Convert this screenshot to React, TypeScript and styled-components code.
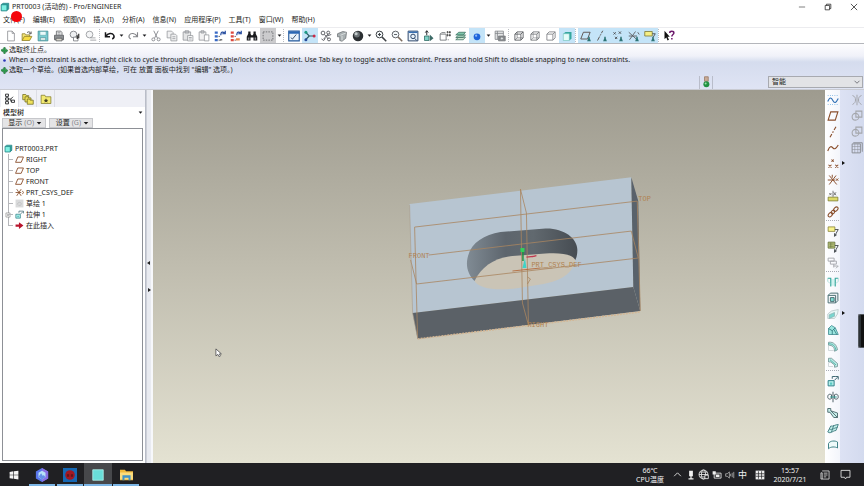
import React from "react";
import styled, { createGlobalStyle, css } from "styled-components";

const GlobalStyle = createGlobalStyle`
  * { box-sizing: border-box; }
  html, body { margin: 0; height: 100%; }
  #root { height: 100%; }
  body, button, select {
    font-family: "Noto Sans", "Noto Sans CJK SC", sans-serif;
    color: #1d1d22;
  }
  button { border: 0; padding: 0; background: none; font-size: 7px; }
`;

/* ---------- icons, all on a 16 x 16 grid ---------- */

const K = "#444a4e";
const T = "#35a79c";
const B = "#8a4f2c";
const G = "#a4a6ab";

const eye = <path d="M11 9h2v2l1.500 4h-5L11 11z" fill="#2f7476" />;
const cube = (stroke: string, hidden: boolean) => (
  <g fill="none" stroke={stroke} strokeWidth="1.200">
    <path d="M2.500 5.500h8v8h-8zM2.500 5.500l3-3h8l-3 3M13.500 2.500v8l-3 3" />
    {hidden && <path d="M5.500 2.500v8h8M5.500 10.500l-3 3" strokeWidth=".8" />}
  </g>
);

const icons: Record<string, React.ReactNode> = {
  part: (
    <g stroke="#1e7f80" strokeWidth="1">
      <path d="M2 4l3-2h9v9l-3 3H2z" fill="#2d9c9a" />
      <path d="M2 4.500h9V14H2z" fill="#7ff0e2" />
    </g>
  ),
  file: <path d="M3.500 1.500h6l3 3v10h-9zM9.500 1.500v3h3" fill="#fff" stroke="#85878c" />,
  open: (
    <g stroke="#8a7a22" strokeWidth="1">
      <path d="M1.500 14V5h4l1 1.500h5V9" fill="#f4e67b" />
      <path d="M1.500 14l3-5.500h10l-3 5.500z" fill="#f6dc45" />
      <path d="M8 3.500c2-2 4-1 5 1M13.500 2v3h-3" fill="none" stroke="#333" />
    </g>
  ),
  save: (
    <g stroke="#3c8a92">
      <path d="M1.500 1.500h13v13h-13z" fill="#79cdd2" />
      <path d="M4 2h8v5H4z" fill="#e9fbfb" strokeWidth=".5" />
      <path d="M4.500 10h7v4h-7z" fill="#d7e6e6" strokeWidth=".7" />
    </g>
  ),
  print: (
    <g stroke="#55585c">
      <path d="M4.500 7V1.500h6l1.500 2V7" fill="#f5f5f5" />
      <path d="M2 7h12v6H2z" fill="#8d9092" />
      <path d="M4 11h8v3.500H4z" fill="#d9d6cc" />
      <path d="M6 3.500h4M6 5.500h4" strokeWidth=".7" />
    </g>
  ),
  mailPin: (
    <g fill="none" stroke="#6c6f74">
      <circle cx="6" cy="6" r="4.500" fill="#eef0f2" />
      <path d="M6 9.500h6v5H6z" fill="#fff" />
      <path d="M13 5v6M11 7v5" stroke="#222" strokeWidth="1.500" />
    </g>
  ),
  mail: (
    <g fill="none" stroke="#8b8d92">
      <circle cx="6" cy="6" r="4.500" fill="#f4f5f6" />
      <path d="M7 10.500h7M7 13.500h8" />
    </g>
  ),
  undo: <path d="M2 3v6h6M2.500 8.500C5 4 11 3.500 13 7c1 2.200 0 4-2 5" fill="none" stroke="#18181b" strokeWidth="2" />,
  redo: <path d="M14 3v6H8M13.500 8.500C11 4 5 3.500 3 7c-1 2.200 0 4 2 5" fill="none" stroke="#85868a" strokeWidth="1.500" />,
  cut: (
    <g fill="none" stroke="#8d8f94" strokeWidth="1.300">
      <path d="M5 1l5 10M11 1L6 11" />
      <circle cx="4.500" cy="12.500" r="2" />
      <circle cx="11.500" cy="12.500" r="2" />
    </g>
  ),
  copy: (
    <g fill="#f1f1f2" stroke="#93959a">
      <path d="M1.500 1.500h6l2 2v7h-8z" />
      <path d="M6.500 5.500h6l2 2v7h-8zM8.500 9h4M8.500 11.500h4" />
    </g>
  ),
  paste: (
    <g fill="#e4e5e6" stroke="#8f9196">
      <path d="M1.500 2.500h10v11h-10zM4 1h5v3H4z" />
      <path d="M7.500 7.500h7v7h-7zM9 10h4M9 12h4" fill="#fff" />
    </g>
  ),
  pasteSpecial: (
    <g fill="#f2f2f2" stroke="#8f9196">
      <path d="M1.500 2.500h9v11h-9zM4 1h4v3H4z" />
      <path d="M8.500 6.500h6v8h-6z" fill="#fff" />
    </g>
  ),
  regen: (
    <g>
      <path d="M1 2h4v3H1zM1 7h4v3H1zM1 12h4v3H1z" fill="#3768c4" />
      <path d="M6 8.500h2M6 13.500h3" stroke="#333" />
      <path d="M9 7c0-5 3-5 5-3M15 1v4h-4" fill="none" stroke="#22499d" strokeWidth="1.600" />
      <path d="M8 12h3v2H8z" fill="#777" />
    </g>
  ),
  regenAll: (
    <g>
      <path d="M1 2h4v3H1zM1 7h4v3H1zM1 12h4v3H1z" fill="#dd4a3f" />
      <path d="M6 8.500h2M6 13.500h2" stroke="#633" />
      <path d="M9 7c0-5 3-5 5-3M15 1v4h-4" fill="none" stroke="#22499d" strokeWidth="1.600" />
      <path d="M8 11h5v3H8z" fill="#e58a4a" />
    </g>
  ),
  find: (
    <g fill="#1a1b1e">
      <path d="M3 2h3v3l1 2h2l1-2V2h3v3l2 4v5h-5v-4H6v4H1V9l2-4z" />
      <path d="M2.500 10h2v3h-2zM11.500 10h2v3h-2z" fill="#8e9094" />
    </g>
  ),
  select: <path d="M1.500 2.500h13v11h-13z" fill="none" stroke="#55585c" strokeDasharray="2 1.500" />,
  window: (
    <g>
      <path d="M1 1.500h14v13H1z" fill="#e9f3fb" stroke="#23589c" strokeWidth="1.500" />
      <path d="M1 2h14v3H1z" fill="#2b68b4" />
      <path d="M6 12l5-6M4 10l2 2.500" stroke="#39506c" strokeWidth="1.300" fill="none" />
    </g>
  ),
  spin: (
    <g>
      <path d="M2 3l5 5h7M7 8l-5 5" fill="none" stroke="#295a66" strokeWidth="1.500" />
      <circle cx="2.500" cy="3" r="2" fill="#1d9b84" />
      <circle cx="2.500" cy="13" r="2" fill="#274d9a" />
      <circle cx="13.500" cy="8" r="2" fill="#c92b48" />
    </g>
  ),
  orient: (
    <g fill="none" stroke="#55575c" strokeWidth="1.200">
      <circle cx="4" cy="4" r="2.500" />
      <circle cx="11" cy="3.500" r="2" />
      <path d="M6 6l5 6M11 5l-6 7M9 8l6-2" />
      <circle cx="12" cy="12.500" r="2" />
      <path d="M2 12l3 2 2-3" />
    </g>
  ),
  shadeCup: (
    <g stroke="#6c7074">
      <path d="M2 5l7-3 5 1-1 8-5 4-3-1V9L2 9z" fill="#a9b0b2" />
      <path d="M6 7l7-3M8 8v6" fill="none" stroke="#e8ecec" />
    </g>
  ),
  sphere: (
    <g>
      <circle cx="8" cy="8" r="7" fill="#2b2f32" />
      <circle cx="6.500" cy="6" r="4" fill="#6b7275" />
      <circle cx="5.500" cy="5" r="2" fill="#c5cccd" />
    </g>
  ),
  zoomIn: (
    <g fill="none" stroke="#3c4044" strokeWidth="1.300">
      <circle cx="6" cy="6" r="4.500" fill="#f4f8fa" />
      <path d="M4 6h4M6 4v4" />
      <path d="M9.500 9.500L15 15" strokeWidth="2" />
    </g>
  ),
  zoomOut: (
    <g fill="none" stroke="#54575c" strokeWidth="1.200">
      <circle cx="6" cy="6" r="4.500" fill="#f4f8fa" />
      <path d="M4 6h4" />
      <path d="M9.500 9.500L15 15" strokeWidth="2" stroke="#7b6b5e" />
    </g>
  ),
  refit: (
    <g fill="none" stroke="#2b4468" strokeWidth="1.300">
      <path d="M1.500 1.500h13v13h-13z" fill="#e8f1fa" />
      <path d="M2 3h12" stroke="#3a70b2" strokeWidth="2" />
      <circle cx="8" cy="8.500" r="3" />
      <path d="M10 11l3 3" />
    </g>
  ),
  reorient: (
    <g>
      <path d="M2 8h6v6H2z" fill="#7fd0c6" stroke="#2a665f" />
      <path d="M5 7V1M3 3.500L5 1l2 2.500" stroke="#26282c" fill="none" strokeWidth="1.300" />
      <path d="M9 6l5 5-5 4z" fill="#3c6a66" />
    </g>
  ),
  views: (
    <g fill="none" stroke="#76797d" strokeWidth="1.200">
      <path d="M1.500 5.500h8v8h-8zM1.500 5.500l2-2h5" />
      <path d="M11 2h1v2h-1zM14 2h1v2h-1zM11 6h1v2h-1zM14 6h1v2h-1z" stroke="#444" />
      <path d="M10 13h4" strokeDasharray="1 1" />
    </g>
  ),
  layers: (
    <g stroke="#3a6f5f">
      <path d="M1 13l4-3.500h9l-3 3.500z" fill="#cfe3d0" />
      <path d="M1 10l4-3.500h9L11 10z" fill="#9cc9b4" />
      <path d="M1 6.500L5 3h9l-3 3.500z" fill="#7fc6ab" />
    </g>
  ),
  bluedot: (
    <g>
      <circle cx="8" cy="9" r="4.500" fill="#1c63da" />
      <circle cx="6.800" cy="7.600" r="1.500" fill="#8db9fa" />
    </g>
  ),
  camera: (
    <g stroke="#7b7e82">
      <path d="M1.500 1.500h11v11h-11zM1.500 4.500h11M4.500 1.500v11" fill="#e6e7e8" />
      <path d="M6 8h9v6.500H6z" fill="#84878a" />
      <circle cx="10.500" cy="11.200" r="2" fill="#dfe3e4" />
    </g>
  ),
  wire: cube("#5d6064", true),
  hidden: cube("#777a7e", true),
  nohidden: cube("#85878b", false),
  shaded: (
    <g>
      <path d="M3 5l3-2.500h8v9L11 14H3z" fill="#35a79e" />
      <path d="M3 5h8v9H3z" fill="#e4fbf8" stroke="#7dc8c4" strokeWidth=".7" />
    </g>
  ),
  showPlane: (
    <g>
      <path d="M4.500 3h9l-3.500 9H1z" fill="none" stroke="#584c48" strokeWidth="1.200" />
      {eye}
    </g>
  ),
  showAxis: (
    <g>
      <path d="M2 14L9 1" stroke="#5b5552" strokeWidth="1.300" strokeDasharray="6 1.500 2 1.500" />
      {eye}
    </g>
  ),
  showPoint: (
    <g>
      <path d="M2 3l3 3M5 3L2 6M9 2l3 3M12 2L9 5M4 9l3 3M7 9l-3 3" stroke="#4c4d50" strokeWidth="1.200" />
      {eye}
    </g>
  ),
  showCsys: (
    <g>
      <path d="M1 3l10 9M10 2L2 13M1 8h11M13 3l2 3" stroke="#5b5c60" strokeWidth="1.200" />
      {eye}
    </g>
  ),
  showNote: (
    <g>
      <path d="M1 2h10v6H1z" fill="#f5ef86" stroke="#77712f" />
      <path d="M11 5h4l-3 5" fill="none" stroke="#333" />
      {eye}
    </g>
  ),
  help: (
    <g>
      <path d="M2 1v11l2.500-2 1.500 4 2-1-2-4h3z" fill="#111" />
      <path d="M9 4c0-3 5.500-3 5.500 0 0 2-2.700 2-2.700 4.500M11.800 10.500v2" fill="none" stroke="#6d1a6d" strokeWidth="2" />
    </g>
  ),
  tree: (
    <g fill="none" stroke="#2b2c30" strokeWidth="1.200">
      <path d="M2 1.500h4v3H2zM2 6.500h4v3H2zM2 11.500h4v3H2zM4 4.500v2M4 9.500v2M6 8h3" />
      <path d="M10 9.500h4v3h-4zM9 8v3h1M9 8l3-3" />
    </g>
  ),
  folders: (
    <g fill="#efe25c" stroke="#6f6a22">
      <path d="M1 2h4l1 1.500h3V9H1z" />
      <path d="M4 5h4l1 1.500h3V12H4z" />
      <path d="M7 8h3l1 1.500h4V15H7z" />
    </g>
  ),
  favorite: (
    <g>
      <path d="M1.500 3h5l1 2h7v9h-13z" fill="#f3ea72" stroke="#807a2a" />
      <path d="M8 7l1 2 2 .2-1.500 1.400.5 2L8 11.500 6 12.600l.5-2L5 9.200 7 9z" fill="#444023" />
    </g>
  ),
  plane: <path d="M5 3.500h10L11 13H1z" fill="none" stroke={B} strokeWidth="1.600" />,
  planeTall: <path d="M5 2.500h9.500L11 13.500H1.500z" fill="none" stroke={B} strokeWidth="1.500" />,
  csys: (
    <g fill="none" stroke={B} strokeWidth="1.500">
      <path d="M1 8h10M3 2l8 12M11 2L3 14M13 5l2 3-2 3" />
    </g>
  ),
  sketchOff: (
    <g>
      <path d="M1 1h14v14H1z" fill="#d9dadb" />
      <path d="M4 10c1-5 6-5 7-2s-3 4-5 3" fill="none" stroke="#b3b4b6" />
    </g>
  ),
  extrude: (
    <g strokeWidth="1.300">
      <path d="M1.500 7.500h8v7h-8z" fill="#b5efea" stroke="#2c8088" />
      <path d="M4 10h3v3H4z" fill="#59c7c2" />
      <path d="M7 5V2h4M10 7l4-4M11 2h4v4" fill="none" stroke="#3d6670" />
    </g>
  ),
  insert: <path d="M1 6h6V2l8 6-8 6v-4H1z" fill="#b8142c" />,
  sketch: (
    <g fill="none" stroke="#2e6fb5" strokeWidth="1.500">
      <path d="M1 10c3-7 5-5 7-1s4 3 7-3" />
      <path d="M1 2h14M1 14h14" strokeDasharray="1 2" stroke="#7ab4e2" />
    </g>
  ),
  axis: <path d="M4 15L12 1" stroke={B} strokeWidth="1.500" strokeDasharray="5 2 2 2" />,
  curve: <path d="M1 12C4 4 6 6 8 8s4 1 7-4" fill="none" stroke={B} strokeWidth="1.500" />,
  points: <path d="M6 2l3 3M9 2L6 5M2 9l4 4M6 9l-4 4M11 9l4 4M15 9l-4 4" stroke={B} strokeWidth="1.400" />,
  csysR: <path d="M3 2l10 12M12 2L3 14M1 8h10M12 6l3 3M15 6l-3 3M7 1v4" stroke={B} strokeWidth="1.300" />,
  analysis: (
    <g>
      <path d="M1.500 9.500h13v5h-13z" fill="#dcd968" stroke="#77752c" />
      <path d="M3 4l3 3M6 4L3 7M9 3l3 4M12 3L9 7M8 1v8" stroke="#555" />
    </g>
  ),
  refer: (
    <g fill="none" stroke={B} strokeWidth="1.400">
      <ellipse cx="4.500" cy="11.500" rx="3.500" ry="2.200" transform="rotate(-45 4.500 11.500)" />
      <ellipse cx="8" cy="8" rx="3" ry="2" transform="rotate(-45 8 8)" />
      <ellipse cx="11.800" cy="4.200" rx="3.500" ry="2.200" transform="rotate(-45 11.800 4.200)" />
    </g>
  ),
  note: (
    <g>
      <path d="M1.500 2.500h9v6h-9z" fill="#f7f28c" stroke="#817b2f" />
      <path d="M10.500 6h4.500l-5 9M10 11v4l3-2" fill="none" stroke={K} strokeWidth="1.200" />
    </g>
  ),
  noteGrid: (
    <g>
      <path d="M1.500 1.500h9v8h-9z" fill="#b9c37a" stroke="#5c6a31" />
      <path d="M3 4h6M3 7h6M5 2v7" stroke="#6d7b45" />
      <path d="M10.500 6h4.500l-5 9M10 11v4l3-2" fill="none" stroke={K} strokeWidth="1.200" />
    </g>
  ),
  noteOff: (
    <g fill="none" stroke={G} strokeWidth="1.200">
      <path d="M1.500 1.500h8v4h-8zM4.500 5.500h8v4h-8zM9 12h6l-3 3M9 9.500V14" />
    </g>
  ),
  hole: (
    <g>
      <path d="M5 4h6v9H5z" fill="#d2f3f0" />
      <path d="M1 3h4v11M15 3h-4v11" fill="none" stroke={T} strokeWidth="1.500" />
      <path d="M1 3v4l3 3M15 3v4l-3 3" fill="none" stroke="#9bd8d2" />
    </g>
  ),
  shell: (
    <g fill="none" stroke="#476c70" strokeWidth="1.300">
      <path d="M1.500 4.500h10v10h-10zM1.500 4.500l3-3h10v10l-3 3" />
      <path d="M4.500 7.500h5v5h-5z" fill="#80ded6" />
    </g>
  ),
  rib: (
    <g>
      <path d="M1 8l5-4 9-2-1 6-4 6H1z" fill="#e9f8f7" stroke="#b5c4c6" />
      <path d="M3 9l7-3v5l-7 3z" fill="#79d5ce" stroke="#8eb4b4" />
    </g>
  ),
  draft: (
    <g stroke="#35838a">
      <path d="M2 14V6l4-4 5 3 4 9z" fill="#9be6df" />
      <path d="M2 6l5 3v5M7 9l4-4M9 7l4 7" fill="none" stroke="#276e74" />
    </g>
  ),
  round: (
    <g>
      <path d="M2 3c7-1 11 4 12 10l-4 2C10 9 7 7 2 7z" fill="#b9e9e3" stroke="#6b8c8d" />
      <path d="M2 5c6 0 9 3 10 9" fill="none" stroke={T} />
      <path d="M2 8v6h7" fill="none" stroke="#c4cdd0" />
    </g>
  ),
  chamfer: (
    <g>
      <path d="M2 3h4l8 7v4l-4 1v-3L5 8H2z" fill="#b9e9e3" stroke="#6b8c8d" />
      <path d="M4 5l8 7" fill="none" stroke={T} />
      <path d="M2 9v5h6" fill="none" stroke="#c4cdd0" />
    </g>
  ),
  revolve: (
    <g fill="none" stroke="#4c5f65" strokeWidth="1.300">
      <path d="M8 1v14M6 5C2 3 1 6 1 8s2 4 5 2zM10 5c4-2 5 1 5 3s-2 4-5 2z" />
      <path d="M4 8h9" stroke={T} />
    </g>
  ),
  sweep: (
    <g stroke="#4a676b" strokeWidth="1.200">
      <path d="M1 2h4v3l9 3v6H9L4 7H1z" fill="#c9efeb" />
      <path d="M5 5l9 9" fill="none" />
    </g>
  ),
  boundary: (
    <g stroke="#3f7c80" strokeWidth="1.200">
      <path d="M1 12L5 4c3 1 6-2 10-2l-3 8c-4 0-7 5-11 2z" fill="#c2eeea" />
      <path d="M3 8c4 2 7-2 11-2M9 3L6 12" fill="none" />
    </g>
  ),
  style: <path d="M2 13V6c2-4 9-4 12-2v8c-3-2-9-2-12 1z" fill="#eefafa" stroke="#3c8085" strokeWidth="1.300" />,
  mirror: <path d="M8 1v14M2 2c3 1 4 3 4 6s-1 4-4 6M14 2c-3 1-4 3-4 6s1 4 4 6" fill="none" stroke={G} strokeWidth="1.300" />,
  merge: (
    <g fill="none" stroke={G} strokeWidth="1.400">
      <path d="M6.500 1.500h8v8h-8z" />
      <circle cx="6" cy="9" r="4.500" />
    </g>
  ),
  pattern: (
    <g fill="none" stroke="#8b8e94" strokeWidth="1">
      <path d="M1.500 2.500h11v12h-11zM3 1h12v12" strokeWidth="1.300" />
      <path d="M1.500 6h11M1.500 10h11M5 2.500v12M9 2.500v12" strokeWidth=".7" />
    </g>
  ),
  arrow: <path d="M0 6h3V5h3V3H5l3-3 3 3h-1v3h2V5l4 3-4 4v-2h-2v3h1l-3 3-3-3h1v-3H3v1L0 8z" fill="#2e9c4c" stroke="#17602c" />,
  dot: <circle cx="8" cy="8" r="3" fill="#2b35b8" />,
  light: (
    <g>
      <path d="M6 1h5v6H6z" fill="#c9ab96" stroke="#95765f" />
      <circle cx="8.500" cy="11" r="4" fill="#219143" />
      <circle cx="7.500" cy="10" r="1.300" fill="#9be3a8" />
    </g>
  ),
  chevron: <path d="M3 5.500l5 5 5-5" fill="none" stroke="#55575c" strokeWidth="1.500" />,
  down: <path d="M2 5h12l-6 7z" fill="#1b1b1e" />,
  min: <path d="M3 8h10" stroke="#333" />,
  restore: <path d="M3.500 5.500h7v7h-7zM5.500 5.500v-2h7v7h-2" fill="none" stroke="#222" strokeWidth="1.200" />,
  close: <path d="M3 3l10 10M13 3L3 13" stroke="#222" strokeWidth="1.200" />,
  plus: <path d="M2.500 2.500h11v11h-11zM5 8h6M8 5v6" fill="#fff" stroke="#777" strokeWidth="1.500" />,
  windows: <path d="M1 3l6-1v5.500H1zM8 1.900L15 1v6.500H8zM1 8.500h6V14l-6-1zM8 8.500h7V15l-7-1z" fill="#f4f4f4" />,
  hexagon: (
    <g>
      <path d="M8 0l7 4v8l-7 4-7-4V4z" fill="#5a77ec" />
      <path d="M8 0l7 4v8l-7 4z" fill="#8a6fe4" />
      <path d="M8 3l4 2.500v5L8 13l-4-2.500v-5z" fill="#b8e3f8" />
      <path d="M4 10l3-4 2 3 1-1 2 2.500L8 13z" fill="#6690e8" />
    </g>
  ),
  recorder: (
    <g>
      <path d="M0 0h16v16H0z" fill="#1668b4" />
      <circle cx="8" cy="8" r="5.500" fill="#a31822" />
      <path d="M4.500 7h2.500v3H4.500zM9 7h2.500v3H9z" fill="#63151d" />
    </g>
  ),
  proe: <path d="M1 1h14v14H1z" fill="#69ded8" stroke="#b6f4ef" />,
  explorer: (
    <g>
      <path d="M0 2h6l1.500 2H16v11H0z" fill="#f0b93c" />
      <path d="M0 5.500h16V14H0z" fill="#fbdc7c" />
      <path d="M3 15V9h10v6h-2.500v-3h-5v3z" fill="#4093c8" />
    </g>
  ),
  up: <path d="M2 11l6-6 6 6" fill="none" stroke="#eee" strokeWidth="1.500" />,
  mic: <path d="M5 1h6v9H5zM7 10h2v3H7zM4 13h8v2H4z" fill="#f0f0f0" />,
  globe: (
    <g fill="none" stroke="#eee" strokeWidth="1.200">
      <circle cx="8" cy="8" r="6.500" />
      <ellipse cx="8" cy="8" rx="3" ry="6.500" />
      <path d="M1.500 8h13M2.500 4.500h11M2.500 11.500h11" />
      <path d="M10 9h5v5h-5z" fill="#242326" />
    </g>
  ),
  battery: (
    <g>
      <path d="M3.500 5h11v8h-11z" fill="none" stroke="#eee" strokeWidth="1.300" />
      <path d="M6 7h6v4H6zM1 2h5v5H1z" fill="#eee" />
    </g>
  ),
  volume: (
    <g fill="none" stroke="#b9b9ba" strokeWidth="1.200">
      <path d="M1 6h2.500L7 3v10l-3.500-3H1zM9 6v4M11.500 4.500v7M14 3v10" />
    </g>
  ),
  ime: (
    <g>
      <path d="M1 1h14v14H1z" fill="#f2f2f2" />
      <path d="M1 6h14M1 10h14M5.500 2v12M10.500 2v12" stroke="#2a2a2c" strokeWidth="1.200" />
    </g>
  ),
  news: (
    <g fill="none" stroke="#eee" strokeWidth="1.200">
      <path d="M3.500 1.500h11v13h-13v-10h2M3.500 4.500v10M6 5h6M6 8h6M6 11h4" />
    </g>
  ),
  action: <path d="M1.500 2h13v10h-5L8 14.500 6.500 12h-5z" fill="none" stroke="#eee" strokeWidth="1.200" />,
};

const Glyph = styled.svg<{ $size: number }>`
  display: block;
  flex: none;
  width: ${(p) => p.$size}px;
  height: ${(p) => p.$size}px;
`;

const Icon = ({ name, size = 12 }: { name: string; size?: number }) => (
  <Glyph $size={size} viewBox="0 0 16 16" aria-hidden="true">
    {icons[name]}
  </Glyph>
);

/* ---------- page frame ---------- */

const Page = styled.div`
  display: flex;
  flex-direction: column;
  min-height: 100vh;
  overflow: hidden;
  background: #fff;
`;

const TitleBar = styled.header`
  display: flex;
  align-items: center;
  height: 13px;
  padding: 0 5px 0 0;
  gap: 2px;
`;

const Title = styled.h1`
  flex: 1;
  margin: 0;
  font-size: 7px;
  line-height: 12px;
  font-weight: 400;
`;

const WindowButtons = styled.div`
  display: flex;
  gap: 16px;
`;

const MenuBar = styled.nav`
  position: relative;
  display: flex;
  align-items: center;
  gap: 8px;
  height: 14px;
  padding: 0 3px;
`;

const MenuItem = styled.button`
  line-height: 12px;
  white-space: nowrap;
`;

const RecordDot = styled.span`
  position: absolute;
  left: 11px;
  top: -2px;
  width: 11px;
  height: 11px;
  border-radius: 50%;
  background: #f5060b;
`;

const ToolBar = styled.div`
  display: flex;
  align-items: center;
  height: 17px;
  padding: 0 3px;
  border-top: 1px solid #ececef;
  border-bottom: 1px solid #b4b6bb;
`;

const Tool = styled.button<{ $tone?: "on" | "pressed" }>`
  display: grid;
  place-items: center;
  flex: none;
  width: 16px;
  height: 15px;
  ${(p) => p.$tone === "on" && css`background: #c4e4f8;`}
  ${(p) => p.$tone === "pressed" && css`background: #cbcbcd;`}
`;

const DropButton = styled.button`
  display: grid;
  place-items: center;
  width: 7px;
  height: 15px;
`;

const Divider = styled.span`
  width: 3px;
  height: 13px;
  border-left: 1px dotted #b9bbc0;
`;

const Messages = styled.section`
  background: linear-gradient(#fdfdfe 0, #f0f1f9 12px, #d5dcee 18px, #dfe4f4 100%);
  border-bottom: 1px solid #c9cbd2;
`;

const MessageList = styled.ul`
  list-style: none;
  margin: 0;
  padding: 1px 1px 0;
`;

const Message = styled.li`
  display: flex;
  align-items: center;
  gap: 1px;
  height: 10px;
  font-size: 7px;
  line-height: 10px;
  white-space: nowrap;
`;

const StatusRow = styled.div`
  display: flex;
  justify-content: flex-end;
  align-items: center;
  gap: 55px;
  height: 14px;
  padding-right: 1px;
`;

const LightBox = styled.div`
  display: grid;
  place-items: center;
  width: 14px;
  height: 13px;
  border: solid #b9bdca;
  border-width: 0 1px;
`;

const FilterBox = styled.div`
  display: grid;
  width: 95px;
  > * { grid-area: 1 / 1; }
  > svg { justify-self: end; align-self: center; margin-right: 2px; pointer-events: none; }
`;

const FilterSelect = styled.select`
  appearance: none;
  height: 12px;
  padding: 0 3px;
  border: 1px solid #a8aab0;
  border-radius: 0;
  background: #e2e3e6;
  font-size: 7px;
  line-height: 10px;
`;

/* ---------- main area ---------- */

const Main = styled.main`
  display: flex;
  flex: 1;
  min-height: 0;
`;

const Navigator = styled.aside`
  display: flex;
  flex-direction: column;
  width: 146px;
  padding: 0 2px 2px;
  border-right: 1px solid #b9bdc8;
`;

const NavTabs = styled.div`
  display: flex;
  height: 17px;
  margin: 0 -2px;
  padding-left: 1px;
  background: #eff0f6;
`;

const NavTab = styled.button<{ $active?: boolean }>`
  display: grid;
  place-items: center;
  width: 18px;
  border-right: 1px solid #dcdde4;
  background: ${(p) => (p.$active ? "#fff" : "transparent")};
`;

const NavHeading = styled.div`
  display: flex;
  justify-content: space-between;
  align-items: center;
  height: 11px;
  padding-left: 1px;
`;

const NavTitle = styled.h2`
  margin: 0;
  font-size: 7px;
  line-height: 11px;
  font-weight: 500;
`;

const NavActions = styled.div`
  display: flex;
  gap: 3px;
`;

const NavAction = styled.button`
  display: flex;
  align-items: center;
  justify-content: flex-end;
  gap: 2px;
  width: 44px;
  height: 10px;
  padding-right: 3px;
  border: 1px solid #c6c7cb;
  background: #e4e4e6;
  line-height: 8px;
`;

const Accel = styled.span`
  color: #86878c;
`;

const TreeBox = styled.div`
  flex: 1;
  padding: 14px 1px;
  border: 1px solid #8d9096;
`;

const TreeList = styled.ul`
  list-style: none;
  margin: 0 0 0 4px;
  padding: 0;
  background: linear-gradient(#b5b6ba, #b5b6ba) 0 0 / 1px 72px no-repeat;
`;

const TreeRow = styled.div`
  display: flex;
  align-items: center;
  gap: 2px;
  height: 11px;
  font-size: 7px;
  line-height: 11px;
  white-space: nowrap;
`;

const Branch = styled.span`
  width: 5px;
  border-top: 1px solid #b5b6ba;
`;

const Expander = styled.button`
  width: 6px;
  margin: 0 -5px 0 -3px;
`;

const Splitter = styled.div`
  display: flex;
  flex-direction: column;
  align-items: flex-end;
  justify-content: center;
  gap: 23px;
  width: 7px;
  background: #e9ebf1;
  border-left: 1px solid #cdd0d8;
  border-right: 2px solid #f7f8fb;
  > :first-child { align-self: flex-start; }
`;

const Viewport = styled.section`
  flex: 1;
  min-width: 0;
  background: linear-gradient(#9e9b8f, #bebbad 45%, #e4e2d2);
`;

const Scene = styled.svg`
  display: block;
  width: 100%;
  height: 100%;
`;

const FeatureBar = styled.div`
  display: flex;
  flex-direction: column;
  align-items: center;
  width: 15px;
  padding-top: 2px;
  background: linear-gradient(90deg, #fff, #f3f5fb);
`;

const Feature = styled.button`
  position: relative;
  display: grid;
  place-items: center;
  width: 15px;
  height: 16px;
`;

const Flyout = styled.span`
  position: absolute;
  left: 17px;
  top: 5px;
  z-index: 1;
`;

const RowDivider = styled.span`
  width: 13px;
  height: 3px;
  border-top: 1px dotted #a9acb5;
`;

const EditBar = styled.div`
  position: relative;
  display: flex;
  flex-direction: column;
  align-items: flex-end;
  width: 24px;
  padding-top: 2px;
  background: linear-gradient(90deg, #dde2f4, #d3daee);
`;

const EdgeHandle = styled.span`
  position: absolute;
  right: 0;
  top: 60%;
  width: 6px;
  height: 34px;
  border: 1px solid #53585e;
  border-right: 0;
  border-radius: 2px 0 0 2px;
  background: linear-gradient(90deg, #2c3236 50%, #111 50%);
`;

/* ---------- taskbar ---------- */

const TaskBar = styled.footer`
  display: flex;
  justify-content: space-between;
  height: 23px;
  background: #202023;
  color: #f1f1f1;
`;

const TaskGroup = styled.div`
  display: flex;
  align-items: center;
`;

const TaskButton = styled.button<{ $open?: boolean; $active?: boolean }>`
  display: grid;
  place-items: center;
  width: 28px;
  height: 23px;
  padding-top: 2px;
  border-bottom: 2px solid transparent;
  ${(p) => p.$open && css`border-image: linear-gradient(90deg, transparent 10%, #7cb6e6 10%, #7cb6e6 90%, transparent 90%) 2;`}
  ${(p) => p.$active && css`background: #47484b; border-image: none; border-bottom-color: #7cb6e6;`}
`;

const TrayButton = styled.button`
  display: grid;
  place-items: center;
  width: 13px;
  height: 23px;
  color: #f1f1f1;
  font-size: 9px;
`;

const TrayText = styled.div<{ $width: number }>`
  width: ${(p) => p.$width}px;
  font-size: 7px;
  line-height: 9px;
  text-align: center;
  white-space: nowrap;
`;

const TrayGap = styled.span`
  width: 4px;
`;

type ToolEntry = [kind: "tool" | "drop" | "sep", icon?: string, label?: string, tone?: "on" | "pressed"];

const tools: ToolEntry[] = [
  ["tool", "file", "新建"], ["tool", "open", "打开"], ["tool", "save", "保存"], ["tool", "print", "打印"],
  ["tool", "mailPin", "发送附件"], ["tool", "mail", "发送链接"], ["sep"],
  ["tool", "undo", "撤消"], ["drop", "", "撤消列表"], ["tool", "redo", "重做"], ["drop", "", "重做列表"],
  ["tool", "cut", "剪切"], ["tool", "copy", "复制"], ["tool", "paste", "粘贴"], ["tool", "pasteSpecial", "选择性粘贴"],
  ["tool", "regen", "再生"], ["tool", "regenAll", "再生管理器"], ["tool", "find", "查找"],
  ["tool", "select", "选取框", "pressed"], ["drop", "", "选取方式"], ["sep"],
  ["tool", "window", "激活窗口"], ["tool", "spin", "旋转中心", "on"], ["tool", "orient", "定向模式"],
  ["tool", "shadeCup", "外观"], ["tool", "sphere", "外观库"], ["drop", "", "外观列表"],
  ["tool", "zoomIn", "放大"], ["tool", "zoomOut", "缩小"], ["tool", "refit", "重新调整"],
  ["tool", "reorient", "重定向"], ["tool", "views", "视图列表"], ["tool", "layers", "层"],
  ["tool", "bluedot", "渲染", "on"], ["drop", "", "渲染列表"], ["tool", "camera", "视图管理器"], ["sep"],
  ["tool", "wire", "线框"], ["tool", "hidden", "隐藏线"], ["tool", "nohidden", "无隐藏线"], ["tool", "shaded", "着色", "on"], ["sep"],
  ["tool", "showPlane", "平面显示", "on"], ["tool", "showAxis", "轴显示", "on"], ["tool", "showPoint", "点显示", "on"],
  ["tool", "showCsys", "坐标系显示", "on"], ["tool", "showNote", "注释显示", "on"], ["sep"],
  ["tool", "help", "上下文帮助"],
];

const menus = ["文件(F)", "编辑(E)", "视图(V)", "插入(I)", "分析(A)", "信息(N)", "应用程序(P)", "工具(T)", "窗口(W)", "帮助(H)"];

const features = [
  ["sketch", "planeTall", "axis", "curve", "points", "csysR", "analysis", "refer"],
  ["note", "noteGrid", "noteOff"],
  ["hole", "shell", "rib", "draft", "round", "chamfer"],
  ["extrude", "revolve", "sweep", "boundary", "style"],
];

const treeItems = [
  ["plane", "RIGHT"],
  ["plane", "TOP"],
  ["plane", "FRONT"],
  ["csys", "PRT_CSYS_DEF"],
  ["sketchOff", "草绘 1"],
  ["extrude", "拉伸 1"],
  ["insert", "在此插入"],
];

const Model = () => (
  <Scene viewBox="152 90 673 373" role="img" aria-label="PRT0003">
    <defs>
      <linearGradient id="wall" x1="0" x2="1">
        <stop offset="0" stopColor="#808b94" />
        <stop offset=".35" stopColor="#5d656d" />
        <stop offset=".6" stopColor="#61696f" />
        <stop offset="1" stopColor="#464c52" />
      </linearGradient>
    </defs>
    <path d="M409 204L631 177L633 287L412 313Z" fill="#b7c5d1" />
    <path d="M412 313L633 287L640 311L417 339Z" fill="#5b6167" />
    <path d="M631 177L638 201L640 311L633 287Z" fill="#59626b" />
    <path
      d="M474 281C468 275 465 267 467 258C470 243 483 235 500 232L545 228.500C563 228 577 238 577 250Q577 256 575 260Z"
      fill="url(#wall)"
    />
    <path
      d="M474 281C481 267 493 258 512 256L545 253.500C560 252.500 572 254 575 260C573 273 560 281 543 284L518 288C496 291 479 289 474 281Z"
      fill="#cac4b6"
    />
    <path d="M417 339L640 312" stroke="#d3b694" strokeWidth="1.500" strokeDasharray="2 1" />
    <g fill="none" stroke="#a98560" strokeWidth=".8">
      <path d="M417 338L414 227L637 201L640 311" />
      <path d="M428 255L631 231L638 258L416 284L410 260" />
      <path d="M520 189L522 303L528 325L526 213Z" />
      <path d="M409 205L412 313L417 338" stroke="#a99c8b" strokeWidth=".6" />
      <path d="M512 271L540 268" stroke="#b0602f" />
      <path d="M540 268h12M527 277l3 2-3 5" />
    </g>
    <path d="M522.500 251v10" stroke="#1f9347" strokeWidth="1.500" />
    <path d="M520 248h4v4h-4z" fill="#34d05b" />
    <path d="M526 257l9-1M532 256.500l4-1" stroke="#c13a50" strokeWidth="1.300" />
    <path d="M524.500 258l-2.500 10h4z" fill="#3ed2c6" />
    <g fill="#b08250" fontFamily="Liberation Mono, monospace" fontSize="7">
      <text x="638" y="201">TOP</text>
      <text x="408" y="258">FRONT</text>
      <text x="531" y="267">PRT_CSYS_DEF</text>
      <text x="527" y="327">RIGHT</text>
    </g>
    <path d="M215 349v7l2-1.500 1.500 2.500 1-1-1-2h2z" fill="#fff" stroke="#35353a" strokeWidth=".7" />
  </Scene>
);

export default function App() {
  return (
    <Page>
      <GlobalStyle />
      <TitleBar>
        <Icon name="part" size={10} />
        <Title>PRT0003 (活动的) - Pro/ENGINEER</Title>
        <WindowButtons>
          <button aria-label="最小化"><Icon name="min" size={10} /></button>
          <button aria-label="还原"><Icon name="restore" size={10} /></button>
          <button aria-label="关闭"><Icon name="close" size={10} /></button>
        </WindowButtons>
      </TitleBar>
      <MenuBar>
        {menus.map((m) => <MenuItem key={m}>{m}</MenuItem>)}
        <RecordDot />
      </MenuBar>
      <ToolBar role="toolbar">
        {tools.map(([kind, icon, label, tone], i) => {
          if (kind === "sep") return <Divider key={i} />;
          if (kind === "drop") return <DropButton key={i} aria-label={label}><Icon name="down" size={5} /></DropButton>;
          return <Tool key={i} $tone={tone} aria-label={label}><Icon name={icon!} /></Tool>;
        })}
      </ToolBar>
      <Messages>
        <MessageList>
          <Message><Icon name="arrow" size={7} />选取终止点。</Message>
          <Message>
            <Icon name="dot" size={7} />
            When a constraint is active, right click to cycle through disable/enable/lock the constraint. Use Tab key to toggle active constraint. Press and hold Shift to disable snapping to new constraints.
          </Message>
          <Message><Icon name="arrow" size={7} />选取一个草绘。(如果首选内部草绘，可在 放置 面板中找到 "编辑" 选项。)</Message>
        </MessageList>
        <StatusRow>
          <LightBox><Icon name="light" size={12} /></LightBox>
          <FilterBox>
            <FilterSelect aria-label="选取过滤器" defaultValue="智能"><option>智能</option></FilterSelect>
            <Icon name="chevron" size={8} />
          </FilterBox>
        </StatusRow>
      </Messages>
      <Main>
        <Navigator>
          <NavTabs>
            <NavTab $active aria-label="模型树"><Icon name="tree" /></NavTab>
            <NavTab aria-label="文件夹浏览器"><Icon name="folders" /></NavTab>
            <NavTab aria-label="收藏夹"><Icon name="favorite" /></NavTab>
          </NavTabs>
          <NavHeading>
            <NavTitle>模型树</NavTitle>
            <button aria-label="面板选项"><Icon name="down" size={5} /></button>
          </NavHeading>
          <NavActions>
            <NavAction>显示<Accel>(O)</Accel><Icon name="down" size={6} /></NavAction>
            <NavAction>设置<Accel>(G)</Accel><Icon name="down" size={6} /></NavAction>
          </NavActions>
          <TreeBox>
            <TreeRow><Icon name="part" size={9} />PRT0003.PRT</TreeRow>
            <TreeList>
              {treeItems.map(([icon, label]) => (
                <li key={label}>
                  <TreeRow>
                    {icon === "extrude" && <Expander aria-label="展开"><Icon name="plus" size={6} /></Expander>}
                    <Branch />
                    <Icon name={icon} size={9} />
                    {label}
                  </TreeRow>
                </li>
              ))}
            </TreeList>
          </TreeBox>
        </Navigator>
        <Splitter>
          <Glyph $size={4} viewBox="0 0 4 4"><path d="M3 0v4L0 2z" fill="#222" /></Glyph>
          <Glyph $size={4} viewBox="0 0 4 4"><path d="M1 0v4l3-2z" fill="#222" /></Glyph>
        </Splitter>
        <Viewport><Model /></Viewport>
        <FeatureBar role="toolbar">
          {features.map((group, i) => (
            <React.Fragment key={i}>
              {i > 0 && <RowDivider />}
              {group.map((name) => (
                <Feature key={name} aria-label={name}>
                  <Icon name={name} />
                  {(name === "points" || name === "rib") && (
                    <Flyout><Glyph $size={4} viewBox="0 0 4 4"><path d="M0 0v4l3-2z" fill="#111" /></Glyph></Flyout>
                  )}
                </Feature>
              ))}
            </React.Fragment>
          ))}
        </FeatureBar>
        <EditBar role="toolbar">
          {["mirror", "merge", "merge", "pattern"].map((name, i) => (
            <Feature key={i} aria-label={name}><Icon name={name} /></Feature>
          ))}
          <EdgeHandle />
        </EditBar>
      </Main>
      <TaskBar>
        <TaskGroup>
          <TaskButton aria-label="开始"><Icon name="windows" size={10} /></TaskButton>
          <TaskButton $open aria-label="浏览器"><Icon name="hexagon" size={14} /></TaskButton>
          <TaskButton $open aria-label="录屏"><Icon name="recorder" size={14} /></TaskButton>
          <TaskButton $active aria-label="Pro/ENGINEER"><Icon name="proe" size={12} /></TaskButton>
          <TaskButton $open aria-label="文件资源管理器"><Icon name="explorer" size={13} /></TaskButton>
        </TaskGroup>
        <TaskGroup>
          <TrayText $width={42}>66℃<br />CPU温度</TrayText>
          <TrayButton aria-label="显示隐藏的图标"><Icon name="up" size={9} /></TrayButton>
          <TrayButton aria-label="麦克风"><Icon name="mic" size={10} /></TrayButton>
          <TrayButton aria-label="网络"><Icon name="globe" size={11} /></TrayButton>
          <TrayButton aria-label="电池"><Icon name="battery" size={10} /></TrayButton>
          <TrayButton aria-label="音量"><Icon name="volume" size={10} /></TrayButton>
          <TrayButton>中</TrayButton>
          <TrayGap />
          <TrayButton aria-label="输入法"><Icon name="ime" size={10} /></TrayButton>
          <TrayText $width={48}>15:57<br />2020/7/21</TrayText>
          <TrayGap />
          <TrayButton aria-label="资讯"><Icon name="news" size={10} /></TrayButton>
          <TrayGap /><TrayGap />
          <TrayButton aria-label="通知"><Icon name="action" size={11} /></TrayButton>
          <TrayGap /><TrayGap /><TrayGap />
        </TaskGroup>
      </TaskBar>
    </Page>
  );
}
